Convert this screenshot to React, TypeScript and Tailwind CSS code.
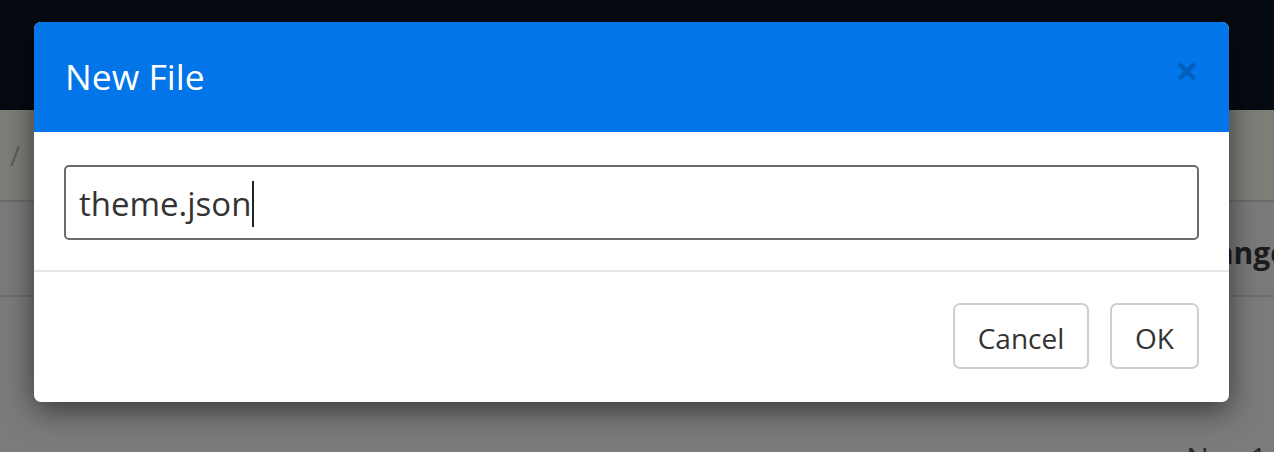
import React from "react";

export default function App() {
  const font = { fontFamily: '"Open Sans", "Noto Sans", sans-serif' };
  return (
    <div className="relative w-full h-[452px] overflow-hidden bg-[#7b7b7b]" style={font}>
      {/* page behind the backdrop */}
      <div className="h-[110px] bg-[#060b12]" />
      <div className="h-[92px] bg-[#7e7e79] border-b-2 border-[#6c6c6a] flex items-center px-[10px]">
        <span className="text-[28px] text-[#5c5c5a]">/</span>
      </div>
      <div className="h-[95px] bg-[#7a7a7a] border-b-2 border-[#6c6c6c] flex items-center justify-end">
        <span className="text-[30px] font-bold text-[#1c1c1c] mr-[-14px] mt-[8px]">Last Change</span>
      </div>
      <div className="flex justify-end pt-[138px] pr-[0px]">
        <span className="text-[30px] text-[#262626] mr-[-10px]">Nov 14</span>
      </div>

      {/* modal */}
      <div className="absolute left-[34px] top-[22px] w-[1195px] h-[380px] bg-white rounded-[7px] shadow-[0_8px_30px_rgba(0,0,0,0.55)] flex flex-col overflow-hidden">
        <div className="h-[110px] bg-[#0275e8] flex items-center justify-between pl-[31px] pr-[30px]">
          <span className="text-[35.5px] font-medium text-white leading-none">New File</span>
          <span className="text-[42px] font-bold leading-none text-[rgba(0,0,0,0.2)] mt-[-14px]">×</span>
        </div>
        <div className="h-[140px] px-[30px] pt-[33px] border-b-2 border-[#e5e5e5]">
          <div className="h-[75px] border-2 border-[#6c6c6c] rounded-[5px] flex items-center pl-[13px]">
            <span className="text-[33px] text-[#333333] leading-none mt-[2px]">theme.json</span>
            <span className="w-[2px] h-[46px] bg-[#222] ml-[1px] mt-[3px]" />
          </div>
        </div>
        <div className="flex-1 flex justify-end items-start gap-[21px] pt-[31px] pr-[30px]">
          <button className="h-[66px] w-[136px] border-2 border-[#cfcfcf] rounded-[7px] text-[28px] text-[#333333] bg-white pt-[3px]">Cancel</button>
          <button className="h-[66px] w-[89px] border-2 border-[#cfcfcf] rounded-[7px] text-[28px] text-[#333333] bg-white pt-[3px]">OK</button>
        </div>
      </div>
    </div>
  );
}
